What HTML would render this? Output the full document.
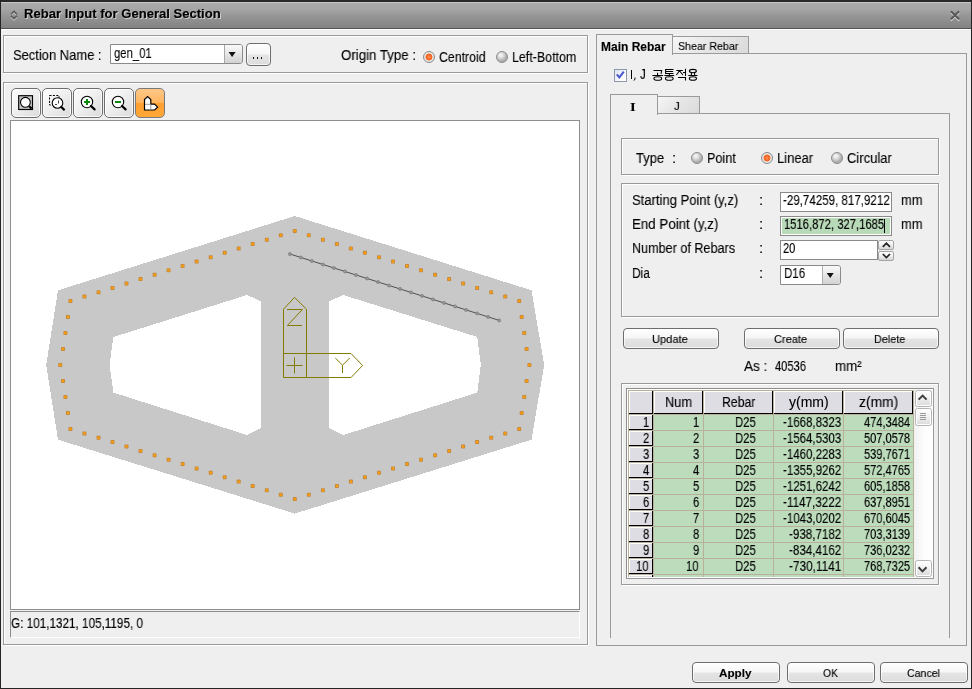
<!DOCTYPE html>
<html><head><meta charset="utf-8"><title>Rebar Input for General Section</title>
<style>
html,body{margin:0;padding:0}
body{width:972px;height:689px;background:#efefef;position:relative;overflow:hidden;font-family:"Liberation Sans",sans-serif;}
.ab{position:absolute;box-sizing:content-box}
.t{position:absolute;white-space:pre;transform-origin:0 0;font-family:"Liberation Sans",sans-serif;will-change:transform;-webkit-text-stroke:0.12px currentColor;}
svg{position:absolute;left:0;top:0;overflow:visible}
</style></head>
<body>
<div class="ab" style="left:0px;top:0px;width:972px;height:2px;background:#282828"></div>
<div class="ab" style="left:0px;top:0px;width:1px;height:689px;background:#242424"></div>
<div class="ab" style="left:971px;top:0px;width:1px;height:689px;background:#242424"></div>
<div class="ab" style="left:0px;top:688px;width:972px;height:1px;background:#242424"></div>
<div class="ab" style="left:1px;top:2px;width:970px;height:27px;background:linear-gradient(#c8c8c8 0,#c4c4c4 1px,#aaaaaa 1.2px,#a6a6a6 25%,#949494 55%,#828282 96%,#808080 26px,#555 26px);"></div>
<div class="ab" style="left:1px;top:29px;width:970px;height:1px;background:#fff"></div>
<svg width="972" height="30"><g fill="none" stroke-width="1.6"><path d="M11 14.4 L14 11.4 L17 14.4" stroke="#c4c4c4" stroke-width="1.3" transform="translate(0,1.2)"/><path d="M11 15.8 L14 18.8 L17 15.8" stroke="#c4c4c4" stroke-width="1.3" transform="translate(0,1.2)"/><path d="M11 14.2 L14 11.2 L17 14.2" stroke="#5a5a5a" stroke-width="1.5"/><path d="M11 15.6 L14 18.6 L17 15.6" stroke="#5a5a5a" stroke-width="1.5"/><path d="M951 12.7 L959 20.7 M959 12.7 L951 20.7" stroke="#dcdcdc" stroke-width="1.6"/><path d="M951 11.3 L959 19.3 M959 11.3 L951 19.3" stroke="#585858" stroke-width="2"/></g></svg>
<span class="t" style="left:24.90px;top:7.64px;font-size:12.3px;line-height:15px;font-weight:700;color:#d0d0d0;transform:scaleX(1.0623);">Rebar Input for General Section</span>
<span class="t" style="left:24.10px;top:6.64px;font-size:12.3px;line-height:15px;font-weight:700;color:#000;transform:scaleX(1.0623);">Rebar Input for General Section</span>
<div class="ab" style="left:4px;top:36px;width:583px;height:36px;border:1px solid #fff;"></div>
<div class="ab" style="left:3px;top:35px;width:583px;height:36px;border:1px solid #9a9a9a;"></div>
<span class="t" style="left:12.70px;top:46.85px;font-size:14px;line-height:17px;font-weight:400;color:#000;transform:scaleX(0.9246);">Section Name :</span>
<div class="ab" style="left:110px;top:44px;width:131px;height:18px;border:1px solid #8a8a8a;background:#fff;border-radius:0 3px 3px 0"></div>
<div class="ab" style="left:224px;top:45px;width:17px;height:18px;border-left:1px solid #a8a8a8;background:linear-gradient(#fafafa,#e6e6e6 50%,#d2d2d2);border-radius:0 2px 2px 0"></div>
<svg width="972" height="100"><path d="M228.6 52 L235.6 52 L232.1 57 Z" fill="#111"/></svg>
<span class="t" style="left:114.30px;top:45.25px;font-size:14px;line-height:17px;font-weight:400;color:#000;transform:scaleX(0.8048);">gen_01</span>
<div class="ab" style="left:246px;top:43px;width:23px;height:21px;border:1px solid #6e6e6e;border-radius:4px;background:linear-gradient(#ffffff 0%,#f6f6f6 45%,#e4e4e4 55%,#dcdcdc 100%);box-shadow:inset 0 0 0 1px rgba(255,255,255,.7);border-radius:4px;"></div>
<div class="ab" style="left:253px;top:57.2px;width:1.3px;height:1.7px;background:#111"></div>
<div class="ab" style="left:257px;top:57.2px;width:1.3px;height:1.7px;background:#111"></div>
<div class="ab" style="left:261px;top:57.2px;width:1.3px;height:1.7px;background:#111"></div>
<span class="t" style="left:340.60px;top:47.15px;font-size:14px;line-height:17px;font-weight:400;color:#000;transform:scaleX(0.9479);">Origin Type :</span>
<div class="ab" style="left:423.3px;top:51.3px;width:10px;height:10px;border:1px solid #8a8a8a;border-radius:50%;background:radial-gradient(circle at 50% 50%, #ff8e58 0,#f2601c 3px,#eef2ee 3.9px,#dcdcdc 5px);"></div>
<span class="t" style="left:439.40px;top:49.25px;font-size:14px;line-height:17px;font-weight:400;color:#000;transform:scaleX(0.8787);">Centroid</span>
<div class="ab" style="left:496.3px;top:51.3px;width:10px;height:10px;border:1px solid #8a8a8a;border-radius:50%;background:radial-gradient(circle at 38% 32%, #fbfbfb 0,#dedede 2.6px,#c2c2c2 4.4px,#acacac 6px);"></div>
<span class="t" style="left:512.40px;top:49.25px;font-size:14px;line-height:17px;font-weight:400;color:#000;transform:scaleX(0.8884);">Left-Bottom</span>
<div class="ab" style="left:4px;top:83px;width:583px;height:561px;border:1px solid #fff;"></div>
<div class="ab" style="left:3px;top:82px;width:583px;height:561px;border:1px solid #9a9a9a;"></div>
<div class="ab" style="left:11px;top:88px;width:28px;height:28px;border:1px solid #6e6e6e;border-radius:5px;background:linear-gradient(135deg,#fdfdfd 0%,#f0f0f0 45%,#dadada 100%);box-shadow:inset 0 0 0 1px rgba(255,255,255,.8)"></div>
<div class="ab" style="left:42px;top:88px;width:28px;height:28px;border:1px solid #6e6e6e;border-radius:5px;background:linear-gradient(135deg,#fdfdfd 0%,#f0f0f0 45%,#dadada 100%);box-shadow:inset 0 0 0 1px rgba(255,255,255,.8)"></div>
<div class="ab" style="left:73px;top:88px;width:28px;height:28px;border:1px solid #6e6e6e;border-radius:5px;background:linear-gradient(135deg,#fdfdfd 0%,#f0f0f0 45%,#dadada 100%);box-shadow:inset 0 0 0 1px rgba(255,255,255,.8)"></div>
<div class="ab" style="left:104px;top:88px;width:28px;height:28px;border:1px solid #6e6e6e;border-radius:5px;background:linear-gradient(135deg,#fdfdfd 0%,#f0f0f0 45%,#dadada 100%);box-shadow:inset 0 0 0 1px rgba(255,255,255,.8)"></div>
<div class="ab" style="left:135px;top:88px;width:28px;height:28px;border:1px solid #7a7a7a;border-radius:5px;background:linear-gradient(#ffc888 0%,#ffb660 48%,#ffa030 52%,#ffa838 100%);"></div>
<svg width="200" height="130"><rect x="18.7" y="95.7" width="13.8" height="13.8" fill="#c6c6c6" stroke="#000" stroke-width="1.15"/><circle cx="25.4" cy="102.3" r="4.9" fill="#fff" stroke="#000" stroke-width="1.1"/><path d="M29.2 106.2 L31.6 108.6" stroke="#000" stroke-width="2.2"/><rect x="49.5" y="95.5" width="9.5" height="9.5" fill="none" stroke="#000" stroke-width="1" stroke-dasharray="2 1.4"/><circle cx="57.5" cy="103" r="5.3" fill="#fff" stroke="#000" stroke-width="1.1"/><path d="M55 104.5 h2 M58.5 100.5 v3" stroke="#444" stroke-width="1"/><path d="M61.3 107 L64 109.6" stroke="#000" stroke-width="2.2" stroke-linecap="round"/><circle cx="87" cy="102" r="5.7" fill="#fff" stroke="#000" stroke-width="1.1"/><path d="M84 102 h6 M87 99 v6" stroke="#0a8a0a" stroke-width="2"/><path d="M91 106 L94.6 109.4" stroke="#000" stroke-width="2.2" stroke-linecap="round"/><circle cx="118" cy="102" r="5.7" fill="#fff" stroke="#000" stroke-width="1.1"/><path d="M115 102 h6" stroke="#0a8a0a" stroke-width="2"/><path d="M122 106 L125.6 109.4" stroke="#000" stroke-width="2.2" stroke-linecap="round"/><path d="M144.5 110 L144.5 99.5 L147.6 96.5 L150.8 99.5 L150.8 104.2 L154.6 104.2 L157.6 107.2 L154.6 110 Z" fill="#fff" stroke="#000" stroke-width="1.2"/><path d="M145 104.3 H150.5 M150.8 104.5 V109.5" stroke="#999" stroke-width="1"/></svg>
<div class="ab" style="left:10px;top:120px;width:568px;height:488px;border:1px solid #8e8e8e;background:#fff;"></div>
<div class="ab" style="left:10px;top:611px;width:569px;height:26px;border-left:1px solid #8e8e8e;border-top:1px solid #8e8e8e;border-right:1px solid #fff;border-bottom:1px solid #fff;width:568px;height:25px"></div>
<span class="t" style="left:11.40px;top:614.95px;font-size:14px;line-height:17px;font-weight:400;color:#000;transform:scaleX(0.8367);">G: 101,1321, 105,1195, 0</span>
<svg width="590" height="620" shape-rendering="crispEdges"><path d="M294.8 216.0 L531.5 290.3 L544.2 365.0 L531.5 439.7 L294.8 513.6 L58.0 439.7 L46.2 365.0 L58.0 290.3 Z M113.4 337.0 L247.0 295.0 L261.0 301.3 L261.0 428.0 L247.0 435.0 L113.4 392.6 L109.5 364.8 Z M477.3 337.0 L343.3 295.0 L329.0 301.3 L329.0 428.0 L343.3 435.0 L477.3 392.6 L480.8 364.8 Z" fill="#c8c8c8" fill-rule="evenodd"/></svg>
<svg width="590" height="620"><rect x="68.4" y="299.0" width="4" height="4" rx="0.7" fill="#c48a3c"/><rect x="69.3" y="299.9" width="2.2" height="2.2" fill="#ff9d0e"/><rect x="517.2" y="299.0" width="4" height="4" rx="0.7" fill="#c48a3c"/><rect x="518.1" y="299.9" width="2.2" height="2.2" fill="#ff9d0e"/><rect x="68.4" y="427.0" width="4" height="4" rx="0.7" fill="#c48a3c"/><rect x="69.3" y="427.9" width="2.2" height="2.2" fill="#ff9d0e"/><rect x="517.2" y="427.0" width="4" height="4" rx="0.7" fill="#c48a3c"/><rect x="518.1" y="427.9" width="2.2" height="2.2" fill="#ff9d0e"/><rect x="82.4" y="294.6" width="4" height="4" rx="0.7" fill="#c48a3c"/><rect x="83.3" y="295.5" width="2.2" height="2.2" fill="#ff9d0e"/><rect x="503.2" y="294.6" width="4" height="4" rx="0.7" fill="#c48a3c"/><rect x="504.1" y="295.5" width="2.2" height="2.2" fill="#ff9d0e"/><rect x="82.4" y="431.4" width="4" height="4" rx="0.7" fill="#c48a3c"/><rect x="83.3" y="432.3" width="2.2" height="2.2" fill="#ff9d0e"/><rect x="503.2" y="431.4" width="4" height="4" rx="0.7" fill="#c48a3c"/><rect x="504.1" y="432.3" width="2.2" height="2.2" fill="#ff9d0e"/><rect x="96.5" y="290.2" width="4" height="4" rx="0.7" fill="#c48a3c"/><rect x="97.4" y="291.1" width="2.2" height="2.2" fill="#ff9d0e"/><rect x="489.2" y="290.2" width="4" height="4" rx="0.7" fill="#c48a3c"/><rect x="490.1" y="291.1" width="2.2" height="2.2" fill="#ff9d0e"/><rect x="96.5" y="435.8" width="4" height="4" rx="0.7" fill="#c48a3c"/><rect x="97.4" y="436.7" width="2.2" height="2.2" fill="#ff9d0e"/><rect x="489.2" y="435.8" width="4" height="4" rx="0.7" fill="#c48a3c"/><rect x="490.1" y="436.7" width="2.2" height="2.2" fill="#ff9d0e"/><rect x="110.5" y="285.9" width="4" height="4" rx="0.7" fill="#c48a3c"/><rect x="111.4" y="286.8" width="2.2" height="2.2" fill="#ff9d0e"/><rect x="475.1" y="285.9" width="4" height="4" rx="0.7" fill="#c48a3c"/><rect x="476.0" y="286.8" width="2.2" height="2.2" fill="#ff9d0e"/><rect x="110.5" y="440.1" width="4" height="4" rx="0.7" fill="#c48a3c"/><rect x="111.4" y="441.0" width="2.2" height="2.2" fill="#ff9d0e"/><rect x="475.1" y="440.1" width="4" height="4" rx="0.7" fill="#c48a3c"/><rect x="476.0" y="441.0" width="2.2" height="2.2" fill="#ff9d0e"/><rect x="124.5" y="281.5" width="4" height="4" rx="0.7" fill="#c48a3c"/><rect x="125.4" y="282.4" width="2.2" height="2.2" fill="#ff9d0e"/><rect x="461.1" y="281.5" width="4" height="4" rx="0.7" fill="#c48a3c"/><rect x="462.0" y="282.4" width="2.2" height="2.2" fill="#ff9d0e"/><rect x="124.5" y="444.5" width="4" height="4" rx="0.7" fill="#c48a3c"/><rect x="125.4" y="445.4" width="2.2" height="2.2" fill="#ff9d0e"/><rect x="461.1" y="444.5" width="4" height="4" rx="0.7" fill="#c48a3c"/><rect x="462.0" y="445.4" width="2.2" height="2.2" fill="#ff9d0e"/><rect x="138.5" y="277.1" width="4" height="4" rx="0.7" fill="#c48a3c"/><rect x="139.4" y="278.0" width="2.2" height="2.2" fill="#ff9d0e"/><rect x="447.1" y="277.1" width="4" height="4" rx="0.7" fill="#c48a3c"/><rect x="448.0" y="278.0" width="2.2" height="2.2" fill="#ff9d0e"/><rect x="138.5" y="448.9" width="4" height="4" rx="0.7" fill="#c48a3c"/><rect x="139.4" y="449.8" width="2.2" height="2.2" fill="#ff9d0e"/><rect x="447.1" y="448.9" width="4" height="4" rx="0.7" fill="#c48a3c"/><rect x="448.0" y="449.8" width="2.2" height="2.2" fill="#ff9d0e"/><rect x="152.6" y="272.7" width="4" height="4" rx="0.7" fill="#c48a3c"/><rect x="153.5" y="273.6" width="2.2" height="2.2" fill="#ff9d0e"/><rect x="433.1" y="272.7" width="4" height="4" rx="0.7" fill="#c48a3c"/><rect x="433.9" y="273.6" width="2.2" height="2.2" fill="#ff9d0e"/><rect x="152.6" y="453.3" width="4" height="4" rx="0.7" fill="#c48a3c"/><rect x="153.5" y="454.2" width="2.2" height="2.2" fill="#ff9d0e"/><rect x="433.1" y="453.3" width="4" height="4" rx="0.7" fill="#c48a3c"/><rect x="433.9" y="454.2" width="2.2" height="2.2" fill="#ff9d0e"/><rect x="166.6" y="268.3" width="4" height="4" rx="0.7" fill="#c48a3c"/><rect x="167.5" y="269.2" width="2.2" height="2.2" fill="#ff9d0e"/><rect x="419.0" y="268.3" width="4" height="4" rx="0.7" fill="#c48a3c"/><rect x="419.9" y="269.2" width="2.2" height="2.2" fill="#ff9d0e"/><rect x="166.6" y="457.7" width="4" height="4" rx="0.7" fill="#c48a3c"/><rect x="167.5" y="458.6" width="2.2" height="2.2" fill="#ff9d0e"/><rect x="419.0" y="457.7" width="4" height="4" rx="0.7" fill="#c48a3c"/><rect x="419.9" y="458.6" width="2.2" height="2.2" fill="#ff9d0e"/><rect x="180.6" y="264.0" width="4" height="4" rx="0.7" fill="#c48a3c"/><rect x="181.5" y="264.9" width="2.2" height="2.2" fill="#ff9d0e"/><rect x="405.0" y="264.0" width="4" height="4" rx="0.7" fill="#c48a3c"/><rect x="405.9" y="264.9" width="2.2" height="2.2" fill="#ff9d0e"/><rect x="180.6" y="462.0" width="4" height="4" rx="0.7" fill="#c48a3c"/><rect x="181.5" y="462.9" width="2.2" height="2.2" fill="#ff9d0e"/><rect x="405.0" y="462.0" width="4" height="4" rx="0.7" fill="#c48a3c"/><rect x="405.9" y="462.9" width="2.2" height="2.2" fill="#ff9d0e"/><rect x="194.6" y="259.6" width="4" height="4" rx="0.7" fill="#c48a3c"/><rect x="195.5" y="260.5" width="2.2" height="2.2" fill="#ff9d0e"/><rect x="391.0" y="259.6" width="4" height="4" rx="0.7" fill="#c48a3c"/><rect x="391.9" y="260.5" width="2.2" height="2.2" fill="#ff9d0e"/><rect x="194.6" y="466.4" width="4" height="4" rx="0.7" fill="#c48a3c"/><rect x="195.5" y="467.3" width="2.2" height="2.2" fill="#ff9d0e"/><rect x="391.0" y="466.4" width="4" height="4" rx="0.7" fill="#c48a3c"/><rect x="391.9" y="467.3" width="2.2" height="2.2" fill="#ff9d0e"/><rect x="208.7" y="255.2" width="4" height="4" rx="0.7" fill="#c48a3c"/><rect x="209.6" y="256.1" width="2.2" height="2.2" fill="#ff9d0e"/><rect x="377.0" y="255.2" width="4" height="4" rx="0.7" fill="#c48a3c"/><rect x="377.9" y="256.1" width="2.2" height="2.2" fill="#ff9d0e"/><rect x="208.7" y="470.8" width="4" height="4" rx="0.7" fill="#c48a3c"/><rect x="209.6" y="471.7" width="2.2" height="2.2" fill="#ff9d0e"/><rect x="377.0" y="470.8" width="4" height="4" rx="0.7" fill="#c48a3c"/><rect x="377.9" y="471.7" width="2.2" height="2.2" fill="#ff9d0e"/><rect x="222.7" y="250.8" width="4" height="4" rx="0.7" fill="#c48a3c"/><rect x="223.6" y="251.7" width="2.2" height="2.2" fill="#ff9d0e"/><rect x="362.9" y="250.8" width="4" height="4" rx="0.7" fill="#c48a3c"/><rect x="363.8" y="251.7" width="2.2" height="2.2" fill="#ff9d0e"/><rect x="222.7" y="475.2" width="4" height="4" rx="0.7" fill="#c48a3c"/><rect x="223.6" y="476.1" width="2.2" height="2.2" fill="#ff9d0e"/><rect x="362.9" y="475.2" width="4" height="4" rx="0.7" fill="#c48a3c"/><rect x="363.8" y="476.1" width="2.2" height="2.2" fill="#ff9d0e"/><rect x="236.7" y="246.4" width="4" height="4" rx="0.7" fill="#c48a3c"/><rect x="237.6" y="247.3" width="2.2" height="2.2" fill="#ff9d0e"/><rect x="348.9" y="246.4" width="4" height="4" rx="0.7" fill="#c48a3c"/><rect x="349.8" y="247.3" width="2.2" height="2.2" fill="#ff9d0e"/><rect x="236.7" y="479.6" width="4" height="4" rx="0.7" fill="#c48a3c"/><rect x="237.6" y="480.5" width="2.2" height="2.2" fill="#ff9d0e"/><rect x="348.9" y="479.6" width="4" height="4" rx="0.7" fill="#c48a3c"/><rect x="349.8" y="480.5" width="2.2" height="2.2" fill="#ff9d0e"/><rect x="250.7" y="242.0" width="4" height="4" rx="0.7" fill="#c48a3c"/><rect x="251.6" y="242.9" width="2.2" height="2.2" fill="#ff9d0e"/><rect x="334.9" y="242.0" width="4" height="4" rx="0.7" fill="#c48a3c"/><rect x="335.8" y="242.9" width="2.2" height="2.2" fill="#ff9d0e"/><rect x="250.7" y="484.0" width="4" height="4" rx="0.7" fill="#c48a3c"/><rect x="251.6" y="484.9" width="2.2" height="2.2" fill="#ff9d0e"/><rect x="334.9" y="484.0" width="4" height="4" rx="0.7" fill="#c48a3c"/><rect x="335.8" y="484.9" width="2.2" height="2.2" fill="#ff9d0e"/><rect x="264.8" y="237.7" width="4" height="4" rx="0.7" fill="#c48a3c"/><rect x="265.6" y="238.6" width="2.2" height="2.2" fill="#ff9d0e"/><rect x="320.9" y="237.7" width="4" height="4" rx="0.7" fill="#c48a3c"/><rect x="321.8" y="238.6" width="2.2" height="2.2" fill="#ff9d0e"/><rect x="264.8" y="488.3" width="4" height="4" rx="0.7" fill="#c48a3c"/><rect x="265.6" y="489.2" width="2.2" height="2.2" fill="#ff9d0e"/><rect x="320.9" y="488.3" width="4" height="4" rx="0.7" fill="#c48a3c"/><rect x="321.8" y="489.2" width="2.2" height="2.2" fill="#ff9d0e"/><rect x="278.8" y="233.3" width="4" height="4" rx="0.7" fill="#c48a3c"/><rect x="279.7" y="234.2" width="2.2" height="2.2" fill="#ff9d0e"/><rect x="306.8" y="233.3" width="4" height="4" rx="0.7" fill="#c48a3c"/><rect x="307.7" y="234.2" width="2.2" height="2.2" fill="#ff9d0e"/><rect x="278.8" y="492.7" width="4" height="4" rx="0.7" fill="#c48a3c"/><rect x="279.7" y="493.6" width="2.2" height="2.2" fill="#ff9d0e"/><rect x="306.8" y="492.7" width="4" height="4" rx="0.7" fill="#c48a3c"/><rect x="307.7" y="493.6" width="2.2" height="2.2" fill="#ff9d0e"/><rect x="292.8" y="228.9" width="4" height="4" rx="0.7" fill="#c48a3c"/><rect x="293.7" y="229.8" width="2.2" height="2.2" fill="#ff9d0e"/><rect x="292.8" y="497.1" width="4" height="4" rx="0.7" fill="#c48a3c"/><rect x="293.7" y="498.0" width="2.2" height="2.2" fill="#ff9d0e"/><rect x="65.9" y="315.0" width="4" height="4" rx="0.7" fill="#c48a3c"/><rect x="66.8" y="315.9" width="2.2" height="2.2" fill="#ff9d0e"/><rect x="519.7" y="315.0" width="4" height="4" rx="0.7" fill="#c48a3c"/><rect x="520.6" y="315.9" width="2.2" height="2.2" fill="#ff9d0e"/><rect x="63.4" y="331.0" width="4" height="4" rx="0.7" fill="#c48a3c"/><rect x="64.3" y="331.9" width="2.2" height="2.2" fill="#ff9d0e"/><rect x="522.2" y="331.0" width="4" height="4" rx="0.7" fill="#c48a3c"/><rect x="523.1" y="331.9" width="2.2" height="2.2" fill="#ff9d0e"/><rect x="61.0" y="347.0" width="4" height="4" rx="0.7" fill="#c48a3c"/><rect x="61.9" y="347.9" width="2.2" height="2.2" fill="#ff9d0e"/><rect x="524.6" y="347.0" width="4" height="4" rx="0.7" fill="#c48a3c"/><rect x="525.5" y="347.9" width="2.2" height="2.2" fill="#ff9d0e"/><rect x="58.2" y="363.0" width="4" height="4" rx="0.7" fill="#c48a3c"/><rect x="59.1" y="363.9" width="2.2" height="2.2" fill="#ff9d0e"/><rect x="527.4" y="363.0" width="4" height="4" rx="0.7" fill="#c48a3c"/><rect x="528.3" y="363.9" width="2.2" height="2.2" fill="#ff9d0e"/><rect x="61.0" y="379.0" width="4" height="4" rx="0.7" fill="#c48a3c"/><rect x="61.9" y="379.9" width="2.2" height="2.2" fill="#ff9d0e"/><rect x="524.6" y="379.0" width="4" height="4" rx="0.7" fill="#c48a3c"/><rect x="525.5" y="379.9" width="2.2" height="2.2" fill="#ff9d0e"/><rect x="63.4" y="395.0" width="4" height="4" rx="0.7" fill="#c48a3c"/><rect x="64.3" y="395.9" width="2.2" height="2.2" fill="#ff9d0e"/><rect x="522.2" y="395.0" width="4" height="4" rx="0.7" fill="#c48a3c"/><rect x="523.1" y="395.9" width="2.2" height="2.2" fill="#ff9d0e"/><rect x="65.9" y="411.0" width="4" height="4" rx="0.7" fill="#c48a3c"/><rect x="66.8" y="411.9" width="2.2" height="2.2" fill="#ff9d0e"/><rect x="519.7" y="411.0" width="4" height="4" rx="0.7" fill="#c48a3c"/><rect x="520.6" y="411.9" width="2.2" height="2.2" fill="#ff9d0e"/><path d="M289.9 254 L499.1 320.4" stroke="#505050" stroke-width="1"/><circle cx="289.9" cy="254.0" r="1.5" fill="#9c9c9c" stroke="#747474" stroke-width="0.7"/><circle cx="300.9" cy="257.5" r="1.5" fill="#9c9c9c" stroke="#747474" stroke-width="0.7"/><circle cx="311.9" cy="261.0" r="1.5" fill="#9c9c9c" stroke="#747474" stroke-width="0.7"/><circle cx="322.9" cy="264.5" r="1.5" fill="#9c9c9c" stroke="#747474" stroke-width="0.7"/><circle cx="333.9" cy="268.0" r="1.5" fill="#9c9c9c" stroke="#747474" stroke-width="0.7"/><circle cx="345.0" cy="271.5" r="1.5" fill="#9c9c9c" stroke="#747474" stroke-width="0.7"/><circle cx="356.0" cy="275.0" r="1.5" fill="#9c9c9c" stroke="#747474" stroke-width="0.7"/><circle cx="367.0" cy="278.5" r="1.5" fill="#9c9c9c" stroke="#747474" stroke-width="0.7"/><circle cx="378.0" cy="282.0" r="1.5" fill="#9c9c9c" stroke="#747474" stroke-width="0.7"/><circle cx="389.0" cy="285.5" r="1.5" fill="#9c9c9c" stroke="#747474" stroke-width="0.7"/><circle cx="400.0" cy="288.9" r="1.5" fill="#9c9c9c" stroke="#747474" stroke-width="0.7"/><circle cx="411.0" cy="292.4" r="1.5" fill="#9c9c9c" stroke="#747474" stroke-width="0.7"/><circle cx="422.0" cy="295.9" r="1.5" fill="#9c9c9c" stroke="#747474" stroke-width="0.7"/><circle cx="433.0" cy="299.4" r="1.5" fill="#9c9c9c" stroke="#747474" stroke-width="0.7"/><circle cx="444.0" cy="302.9" r="1.5" fill="#9c9c9c" stroke="#747474" stroke-width="0.7"/><circle cx="455.1" cy="306.4" r="1.5" fill="#9c9c9c" stroke="#747474" stroke-width="0.7"/><circle cx="466.1" cy="309.9" r="1.5" fill="#9c9c9c" stroke="#747474" stroke-width="0.7"/><circle cx="477.1" cy="313.4" r="1.5" fill="#9c9c9c" stroke="#747474" stroke-width="0.7"/><circle cx="488.1" cy="316.9" r="1.5" fill="#9c9c9c" stroke="#747474" stroke-width="0.7"/><circle cx="499.1" cy="320.4" r="1.5" fill="#9c9c9c" stroke="#747474" stroke-width="0.7"/><g fill="none" stroke="#837a00" stroke-width="1"><path d="M283.5 377.5 V309.2 L294.5 297.4 L306.5 309.2 V377.5 M283.5 353.5 H351 L362.6 365.5 L351 377.5 H283.5"/><path d="M287 309.5 H302.4 L287.4 325.5 H302"/><path d="M286.5 365.5 H302.5 M294.5 357.5 V373.5"/><path d="M335.3 358 L342.5 365.2 L349.7 358 M342.5 365.2 V373"/></g></svg>
<div class="ab" style="left:596px;top:53px;width:369px;height:591px;border:1px solid #9a9a9a;"></div>
<div class="ab" style="left:672px;top:36px;width:75px;height:16px;border:1px solid #9a9a9a;border-bottom:none;background:linear-gradient(135deg,#f6f6f6 0%,#e6e6e6 50%,#dadada 100%);"></div>
<div class="ab" style="left:596px;top:34px;width:75px;height:20px;border:1px solid #9a9a9a;border-bottom:none;background:#efefef;"></div>
<span class="t" style="left:601.00px;top:40.04px;font-size:12px;line-height:14px;font-weight:700;color:#000;transform:scaleX(1.0002);">Main Rebar</span>
<span class="t" style="left:677.90px;top:39.11px;font-size:11.8px;line-height:14px;font-weight:400;color:#000;transform:scaleX(0.9015);">Shear Rebar</span>
<div class="ab" style="left:614px;top:69px;width:11px;height:11px;border:1px solid #8c98a8;background:linear-gradient(135deg,#dfe2f2,#fff 80%);"></div>
<svg width="972" height="100"><path d="M616.8 74.4 L619.4 77.4 L623.8 71.6" fill="none" stroke="#4858c8" stroke-width="2"/></svg>
<div class="ab" style="left:631px;top:70px;width:1px;height:9px;background:#000"></div>
<svg width="972" height="100"><path d="M635 77.6 V79 L634 80.6" fill="none" stroke="#000" stroke-width="1"/></svg>
<span class="t" style="left:640.40px;top:65.85px;font-size:14px;line-height:17px;font-weight:400;color:#000;transform:scaleX(0.8286);">J</span>
<svg width="972" height="100"><g fill="none" stroke="#000" stroke-width="1.05"><path d="M653.5 70.5 H661.7 L661 73.8 M657.6 72.8 V75.5 M652.4 75.5 H663.1"/><ellipse cx="657.8" cy="78.4" rx="3.9" ry="1.75"/><path d="M673.5 69.5 H665.6 V73.5 H673.5 M665.6 71.5 H673.2 M669.4 73.5 V75.5 M664.4 75.5 H674.2"/><ellipse cx="669.3" cy="78.5" rx="3.9" ry="1.75"/><path d="M676.4 70.5 H682.8 M679.7 70.5 L676.4 75 M679.7 71 L683 75 M683 72.5 H685.5 M685.5 68.8 V76 M678 77.5 H685.5 V80.4"/><ellipse cx="692.9" cy="71" rx="3.5" ry="1.65"/><path d="M691.4 73 V75.5 M694.6 73 V75.5 M688.3 75.5 H697.5"/><ellipse cx="692.9" cy="78.5" rx="3.6" ry="1.75"/></g></svg>
<div class="ab" style="left:610px;top:113px;width:338px;height:530px;border:1px solid #9a9a9a;border-bottom:none;height:524px"></div>
<div class="ab" style="left:657px;top:96px;width:41px;height:16px;border:1px solid #9a9a9a;border-bottom:none;background:linear-gradient(135deg,#f6f6f6 0%,#e6e6e6 50%,#dadada 100%);"></div>
<div class="ab" style="left:610px;top:94px;width:46px;height:20px;border:1px solid #9a9a9a;border-bottom:none;background:#efefef;"></div>
<span class="t" style="left:630.30px;top:100.08px;font-size:12.5px;line-height:15px;font-weight:700;color:#000;transform:scaleX(1.1692);font-family:'Liberation Serif',serif;">I</span>
<span class="t" style="left:673.90px;top:99.41px;font-size:11.8px;line-height:14px;font-weight:400;color:#000;transform:scaleX(0.9651);">J</span>
<div class="ab" style="left:622px;top:139px;width:316px;height:35px;border:1px solid #fff;"></div>
<div class="ab" style="left:621px;top:138px;width:316px;height:35px;border:1px solid #9a9a9a;"></div>
<span class="t" style="left:636.20px;top:149.95px;font-size:14px;line-height:17px;font-weight:400;color:#000;transform:scaleX(0.9289);">Type</span>
<span class="t" style="left:672.40px;top:149.95px;font-size:14px;line-height:17px;font-weight:400;color:#000;transform:scaleX(1.0795);">:</span>
<div class="ab" style="left:691.3px;top:152.3px;width:10px;height:10px;border:1px solid #8a8a8a;border-radius:50%;background:radial-gradient(circle at 38% 32%, #fbfbfb 0,#dedede 2.6px,#c2c2c2 4.4px,#acacac 6px);"></div>
<span class="t" style="left:706.90px;top:149.95px;font-size:14px;line-height:17px;font-weight:400;color:#000;transform:scaleX(0.9053);">Point</span>
<div class="ab" style="left:761.3px;top:152.3px;width:10px;height:10px;border:1px solid #8a8a8a;border-radius:50%;background:radial-gradient(circle at 50% 50%, #ff8e58 0,#f2601c 3px,#eef2ee 3.9px,#dcdcdc 5px);"></div>
<span class="t" style="left:776.70px;top:149.95px;font-size:14px;line-height:17px;font-weight:400;color:#000;transform:scaleX(0.9275);">Linear</span>
<div class="ab" style="left:831.3px;top:152.3px;width:10px;height:10px;border:1px solid #8a8a8a;border-radius:50%;background:radial-gradient(circle at 38% 32%, #fbfbfb 0,#dedede 2.6px,#c2c2c2 4.4px,#acacac 6px);"></div>
<span class="t" style="left:847.00px;top:149.95px;font-size:14px;line-height:17px;font-weight:400;color:#000;transform:scaleX(0.9288);">Circular</span>
<div class="ab" style="left:622px;top:184px;width:316px;height:132px;border:1px solid #fff;"></div>
<div class="ab" style="left:621px;top:183px;width:316px;height:132px;border:1px solid #9a9a9a;"></div>
<span class="t" style="left:632.00px;top:192.25px;font-size:14px;line-height:17px;font-weight:400;color:#000;transform:scaleX(0.9306);">Starting Point (y,z)</span>
<span class="t" style="left:632.00px;top:215.95px;font-size:14px;line-height:17px;font-weight:400;color:#000;transform:scaleX(0.9517);">End Point (y,z)</span>
<span class="t" style="left:632.00px;top:240.05px;font-size:14px;line-height:17px;font-weight:400;color:#000;transform:scaleX(0.9004);">Number of Rebars</span>
<span class="t" style="left:632.00px;top:265.05px;font-size:14px;line-height:17px;font-weight:400;color:#000;transform:scaleX(0.8517);">Dia</span>
<span class="t" style="left:759.40px;top:192.25px;font-size:14px;line-height:17px;font-weight:400;color:#000;transform:scaleX(1.0795);">:</span>
<span class="t" style="left:759.40px;top:215.95px;font-size:14px;line-height:17px;font-weight:400;color:#000;transform:scaleX(1.0795);">:</span>
<span class="t" style="left:759.40px;top:240.05px;font-size:14px;line-height:17px;font-weight:400;color:#000;transform:scaleX(1.0795);">:</span>
<span class="t" style="left:759.40px;top:265.05px;font-size:14px;line-height:17px;font-weight:400;color:#000;transform:scaleX(1.0795);">:</span>
<div class="ab" style="left:780px;top:192px;width:110px;height:18px;border:1px solid #8a8a8a;background:#fff"></div>
<span class="t" style="left:783.30px;top:192.25px;font-size:14px;line-height:17px;font-weight:400;color:#000;transform:scaleX(0.8256);">-29,74259, 817,9212</span>
<div class="ab" style="left:780px;top:216px;width:110px;height:18px;border:1px solid #8a8a8a;background:#fff"></div>
<div class="ab" style="left:782px;top:218px;width:108px;height:16px;background:#b9dab9"></div>
<span class="t" style="left:783.80px;top:215.95px;font-size:14px;line-height:17px;font-weight:400;color:#000;transform:scaleX(0.8035);">1516,872, 327,1685</span>
<div class="ab" style="left:884px;top:219px;width:1px;height:14px;background:#000"></div>
<span class="t" style="left:901.30px;top:191.85px;font-size:14px;line-height:17px;font-weight:400;color:#000;transform:scaleX(0.9216);">mm</span>
<span class="t" style="left:901.30px;top:215.75px;font-size:14px;line-height:17px;font-weight:400;color:#000;transform:scaleX(0.9216);">mm</span>
<div class="ab" style="left:780px;top:240px;width:96px;height:18px;border:1px solid #8a8a8a;background:#fff"></div>
<span class="t" style="left:783.30px;top:240.05px;font-size:14px;line-height:17px;font-weight:400;color:#000;transform:scaleX(0.7896);">20</span>
<div class="ab" style="left:878px;top:240px;width:14px;height:8px;border:1px solid #a4a4a4;border-radius:2px;background:linear-gradient(#fdfdfd,#f0f0f0 50%,#d4d4d4);"></div>
<div class="ab" style="left:878px;top:251px;width:14px;height:8px;border:1px solid #a4a4a4;border-radius:2px;background:linear-gradient(#fdfdfd,#f0f0f0 50%,#d4d4d4);"></div>
<svg width="972" height="300"><g fill="none" stroke="#222" stroke-width="1.7"><path d="M882.8 246.8 L886.4 243.3 L890 246.8"/><path d="M882.8 254 L886.4 257.5 L890 254"/></g></svg>
<div class="ab" style="left:780px;top:265px;width:59px;height:18px;border:1px solid #8a8a8a;background:#fff;border-radius:0 3px 3px 0"></div>
<div class="ab" style="left:822px;top:266px;width:17px;height:18px;border-left:1px solid #b0b0b0;background:linear-gradient(#fafafa,#e6e6e6 50%,#d2d2d2);border-radius:0 3px 3px 0"></div>
<svg width="972" height="300"><path d="M826.7 273 L833.7 273 L830.2 278 Z" fill="#111"/></svg>
<span class="t" style="left:783.80px;top:265.05px;font-size:14px;line-height:17px;font-weight:400;color:#000;transform:scaleX(0.8214);">D16</span>
<div class="ab" style="left:623px;top:328px;width:94px;height:19px;border:1px solid #6e6e6e;border-radius:4px;background:linear-gradient(#ffffff 0%,#f6f6f6 45%,#e4e4e4 55%,#dcdcdc 100%);box-shadow:inset 0 0 0 1px rgba(255,255,255,.7);"></div>
<span class="t" style="left:652.00px;top:332.21px;font-size:11.8px;line-height:14px;font-weight:400;color:#000;transform:scaleX(0.9409);">Update</span>
<div class="ab" style="left:744px;top:328px;width:94px;height:19px;border:1px solid #6e6e6e;border-radius:4px;background:linear-gradient(#ffffff 0%,#f6f6f6 45%,#e4e4e4 55%,#dcdcdc 100%);box-shadow:inset 0 0 0 1px rgba(255,255,255,.7);"></div>
<span class="t" style="left:774.40px;top:332.21px;font-size:11.8px;line-height:14px;font-weight:400;color:#000;transform:scaleX(0.9373);">Create</span>
<div class="ab" style="left:843px;top:328px;width:94px;height:19px;border:1px solid #6e6e6e;border-radius:4px;background:linear-gradient(#ffffff 0%,#f6f6f6 45%,#e4e4e4 55%,#dcdcdc 100%);box-shadow:inset 0 0 0 1px rgba(255,255,255,.7);"></div>
<span class="t" style="left:874.20px;top:332.21px;font-size:11.8px;line-height:14px;font-weight:400;color:#000;transform:scaleX(0.9176);">Delete</span>
<span class="t" style="left:744.20px;top:358.05px;font-size:14px;line-height:17px;font-weight:400;color:#000;transform:scaleX(0.9699);">As :</span>
<span class="t" style="left:774.80px;top:358.05px;font-size:14px;line-height:17px;font-weight:400;color:#000;transform:scaleX(0.7961);">40536</span>
<span class="t" style="left:835.00px;top:358.05px;font-size:14px;line-height:17px;font-weight:400;color:#000;transform:scaleX(0.9500);">mm²</span>
<div class="ab" style="left:622px;top:384px;width:316px;height:200px;border:1px solid #fff;"></div>
<div class="ab" style="left:621px;top:383px;width:316px;height:200px;border:1px solid #9a9a9a;"></div>
<div class="ab" style="left:626px;top:388px;width:306px;height:189px;border:1px solid #9a9a9a;border-left-color:#8e8e8e;border-top-color:#8e8e8e;background:#fff"></div>
<div class="ab" style="left:628px;top:390px;width:286px;height:187px;background:#b8b09a"></div>
<div class="ab" style="left:629px;top:391px;width:23px;height:22px;background:#dddde3;border-right:1px solid #000;border-bottom:1px solid #000;box-shadow:inset 1px 1px 0 #fff"></div>
<div class="ab" style="left:654px;top:391px;width:48px;height:22px;background:#dddde3;border-right:1px solid #000;border-bottom:1px solid #000;box-shadow:inset 1px 1px 0 #fff"></div>
<div class="ab" style="left:704px;top:391px;width:68px;height:22px;background:#dddde3;border-right:1px solid #000;border-bottom:1px solid #000;box-shadow:inset 1px 1px 0 #fff"></div>
<div class="ab" style="left:774px;top:391px;width:68px;height:22px;background:#dddde3;border-right:1px solid #000;border-bottom:1px solid #000;box-shadow:inset 1px 1px 0 #fff"></div>
<div class="ab" style="left:844px;top:391px;width:68px;height:22px;background:#dddde3;border-right:1px solid #000;border-bottom:1px solid #000;box-shadow:inset 1px 1px 0 #fff"></div>
<div class="ab" style="left:629px;top:415px;width:23px;height:14px;background:#dddde3;border-right:1px solid #000;border-bottom:1px solid #000;box-shadow:inset 1px 1px 0 #fff"></div>
<div class="ab" style="left:654px;top:415px;width:49px;height:15px;background:#bcdcbc"></div>
<div class="ab" style="left:704px;top:415px;width:69px;height:15px;background:#bcdcbc"></div>
<div class="ab" style="left:774px;top:415px;width:69px;height:15px;background:#bcdcbc"></div>
<div class="ab" style="left:844px;top:415px;width:69px;height:15px;background:#bcdcbc"></div>
<div class="ab" style="left:629px;top:431px;width:23px;height:14px;background:#dddde3;border-right:1px solid #000;border-bottom:1px solid #000;box-shadow:inset 1px 1px 0 #fff"></div>
<div class="ab" style="left:654px;top:431px;width:49px;height:15px;background:#bcdcbc"></div>
<div class="ab" style="left:704px;top:431px;width:69px;height:15px;background:#bcdcbc"></div>
<div class="ab" style="left:774px;top:431px;width:69px;height:15px;background:#bcdcbc"></div>
<div class="ab" style="left:844px;top:431px;width:69px;height:15px;background:#bcdcbc"></div>
<div class="ab" style="left:629px;top:447px;width:23px;height:14px;background:#dddde3;border-right:1px solid #000;border-bottom:1px solid #000;box-shadow:inset 1px 1px 0 #fff"></div>
<div class="ab" style="left:654px;top:447px;width:49px;height:15px;background:#bcdcbc"></div>
<div class="ab" style="left:704px;top:447px;width:69px;height:15px;background:#bcdcbc"></div>
<div class="ab" style="left:774px;top:447px;width:69px;height:15px;background:#bcdcbc"></div>
<div class="ab" style="left:844px;top:447px;width:69px;height:15px;background:#bcdcbc"></div>
<div class="ab" style="left:629px;top:463px;width:23px;height:14px;background:#dddde3;border-right:1px solid #000;border-bottom:1px solid #000;box-shadow:inset 1px 1px 0 #fff"></div>
<div class="ab" style="left:654px;top:463px;width:49px;height:15px;background:#bcdcbc"></div>
<div class="ab" style="left:704px;top:463px;width:69px;height:15px;background:#bcdcbc"></div>
<div class="ab" style="left:774px;top:463px;width:69px;height:15px;background:#bcdcbc"></div>
<div class="ab" style="left:844px;top:463px;width:69px;height:15px;background:#bcdcbc"></div>
<div class="ab" style="left:629px;top:479px;width:23px;height:14px;background:#dddde3;border-right:1px solid #000;border-bottom:1px solid #000;box-shadow:inset 1px 1px 0 #fff"></div>
<div class="ab" style="left:654px;top:479px;width:49px;height:15px;background:#bcdcbc"></div>
<div class="ab" style="left:704px;top:479px;width:69px;height:15px;background:#bcdcbc"></div>
<div class="ab" style="left:774px;top:479px;width:69px;height:15px;background:#bcdcbc"></div>
<div class="ab" style="left:844px;top:479px;width:69px;height:15px;background:#bcdcbc"></div>
<div class="ab" style="left:629px;top:495px;width:23px;height:14px;background:#dddde3;border-right:1px solid #000;border-bottom:1px solid #000;box-shadow:inset 1px 1px 0 #fff"></div>
<div class="ab" style="left:654px;top:495px;width:49px;height:15px;background:#bcdcbc"></div>
<div class="ab" style="left:704px;top:495px;width:69px;height:15px;background:#bcdcbc"></div>
<div class="ab" style="left:774px;top:495px;width:69px;height:15px;background:#bcdcbc"></div>
<div class="ab" style="left:844px;top:495px;width:69px;height:15px;background:#bcdcbc"></div>
<div class="ab" style="left:629px;top:511px;width:23px;height:14px;background:#dddde3;border-right:1px solid #000;border-bottom:1px solid #000;box-shadow:inset 1px 1px 0 #fff"></div>
<div class="ab" style="left:654px;top:511px;width:49px;height:15px;background:#bcdcbc"></div>
<div class="ab" style="left:704px;top:511px;width:69px;height:15px;background:#bcdcbc"></div>
<div class="ab" style="left:774px;top:511px;width:69px;height:15px;background:#bcdcbc"></div>
<div class="ab" style="left:844px;top:511px;width:69px;height:15px;background:#bcdcbc"></div>
<div class="ab" style="left:629px;top:527px;width:23px;height:14px;background:#dddde3;border-right:1px solid #000;border-bottom:1px solid #000;box-shadow:inset 1px 1px 0 #fff"></div>
<div class="ab" style="left:654px;top:527px;width:49px;height:15px;background:#bcdcbc"></div>
<div class="ab" style="left:704px;top:527px;width:69px;height:15px;background:#bcdcbc"></div>
<div class="ab" style="left:774px;top:527px;width:69px;height:15px;background:#bcdcbc"></div>
<div class="ab" style="left:844px;top:527px;width:69px;height:15px;background:#bcdcbc"></div>
<div class="ab" style="left:629px;top:543px;width:23px;height:14px;background:#dddde3;border-right:1px solid #000;border-bottom:1px solid #000;box-shadow:inset 1px 1px 0 #fff"></div>
<div class="ab" style="left:654px;top:543px;width:49px;height:15px;background:#bcdcbc"></div>
<div class="ab" style="left:704px;top:543px;width:69px;height:15px;background:#bcdcbc"></div>
<div class="ab" style="left:774px;top:543px;width:69px;height:15px;background:#bcdcbc"></div>
<div class="ab" style="left:844px;top:543px;width:69px;height:15px;background:#bcdcbc"></div>
<div class="ab" style="left:629px;top:559px;width:23px;height:14px;background:#dddde3;border-right:1px solid #000;border-bottom:1px solid #000;box-shadow:inset 1px 1px 0 #fff"></div>
<div class="ab" style="left:654px;top:559px;width:49px;height:15px;background:#bcdcbc"></div>
<div class="ab" style="left:704px;top:559px;width:69px;height:15px;background:#bcdcbc"></div>
<div class="ab" style="left:774px;top:559px;width:69px;height:15px;background:#bcdcbc"></div>
<div class="ab" style="left:844px;top:559px;width:69px;height:15px;background:#bcdcbc"></div>
<div class="ab" style="left:629px;top:575px;width:24px;height:2px;background:#dddde3;border-right:1px solid #000;width:23px;box-shadow:inset 1px 1px 0 #fff"></div>
<div class="ab" style="left:654px;top:575px;width:49px;height:2px;background:#bcdcbc"></div>
<div class="ab" style="left:704px;top:575px;width:69px;height:2px;background:#bcdcbc"></div>
<div class="ab" style="left:774px;top:575px;width:69px;height:2px;background:#bcdcbc"></div>
<div class="ab" style="left:844px;top:575px;width:69px;height:2px;background:#bcdcbc"></div>
<span class="t" style="left:665.20px;top:394.15px;font-size:14px;line-height:17px;font-weight:400;color:#000;transform:scaleX(0.9133);">Num</span>
<span class="t" style="left:722.30px;top:394.15px;font-size:14px;line-height:17px;font-weight:400;color:#000;transform:scaleX(0.8731);">Rebar</span>
<span class="t" style="left:788.80px;top:394.15px;font-size:14px;line-height:17px;font-weight:400;color:#000;transform:scaleX(0.9986);">y(mm)</span>
<span class="t" style="left:859.20px;top:394.15px;font-size:14px;line-height:17px;font-weight:400;color:#000;transform:scaleX(0.9885);">z(mm)</span>
<span class="t" style="left:642.60px;top:414.25px;font-size:14px;line-height:17px;font-weight:400;color:#000;transform:scaleX(0.7952);">1</span>
<span class="t" style="left:692.70px;top:414.25px;font-size:14px;line-height:17px;font-weight:400;color:#000;transform:scaleX(0.7952);">1</span>
<span class="t" style="left:735.00px;top:414.25px;font-size:14px;line-height:17px;font-weight:400;color:#000;transform:scaleX(0.8097);">D25</span>
<span class="t" style="left:782.50px;top:414.25px;font-size:14px;line-height:17px;font-weight:400;color:#000;transform:scaleX(0.8215);">-1668,8323</span>
<span class="t" style="left:864.40px;top:414.25px;font-size:14px;line-height:17px;font-weight:400;color:#000;transform:scaleX(0.7910);">474,3484</span>
<span class="t" style="left:642.60px;top:430.25px;font-size:14px;line-height:17px;font-weight:400;color:#000;transform:scaleX(0.7952);">2</span>
<span class="t" style="left:692.70px;top:430.25px;font-size:14px;line-height:17px;font-weight:400;color:#000;transform:scaleX(0.7952);">2</span>
<span class="t" style="left:735.00px;top:430.25px;font-size:14px;line-height:17px;font-weight:400;color:#000;transform:scaleX(0.8097);">D25</span>
<span class="t" style="left:782.50px;top:430.25px;font-size:14px;line-height:17px;font-weight:400;color:#000;transform:scaleX(0.8215);">-1564,5303</span>
<span class="t" style="left:864.40px;top:430.25px;font-size:14px;line-height:17px;font-weight:400;color:#000;transform:scaleX(0.7910);">507,0578</span>
<span class="t" style="left:642.60px;top:446.25px;font-size:14px;line-height:17px;font-weight:400;color:#000;transform:scaleX(0.7952);">3</span>
<span class="t" style="left:692.70px;top:446.25px;font-size:14px;line-height:17px;font-weight:400;color:#000;transform:scaleX(0.7952);">3</span>
<span class="t" style="left:735.00px;top:446.25px;font-size:14px;line-height:17px;font-weight:400;color:#000;transform:scaleX(0.8097);">D25</span>
<span class="t" style="left:782.50px;top:446.25px;font-size:14px;line-height:17px;font-weight:400;color:#000;transform:scaleX(0.8215);">-1460,2283</span>
<span class="t" style="left:864.40px;top:446.25px;font-size:14px;line-height:17px;font-weight:400;color:#000;transform:scaleX(0.7910);">539,7671</span>
<span class="t" style="left:642.60px;top:462.25px;font-size:14px;line-height:17px;font-weight:400;color:#000;transform:scaleX(0.7952);">4</span>
<span class="t" style="left:692.70px;top:462.25px;font-size:14px;line-height:17px;font-weight:400;color:#000;transform:scaleX(0.7952);">4</span>
<span class="t" style="left:735.00px;top:462.25px;font-size:14px;line-height:17px;font-weight:400;color:#000;transform:scaleX(0.8097);">D25</span>
<span class="t" style="left:782.50px;top:462.25px;font-size:14px;line-height:17px;font-weight:400;color:#000;transform:scaleX(0.8215);">-1355,9262</span>
<span class="t" style="left:864.40px;top:462.25px;font-size:14px;line-height:17px;font-weight:400;color:#000;transform:scaleX(0.7910);">572,4765</span>
<span class="t" style="left:642.60px;top:478.25px;font-size:14px;line-height:17px;font-weight:400;color:#000;transform:scaleX(0.7952);">5</span>
<span class="t" style="left:692.70px;top:478.25px;font-size:14px;line-height:17px;font-weight:400;color:#000;transform:scaleX(0.7952);">5</span>
<span class="t" style="left:735.00px;top:478.25px;font-size:14px;line-height:17px;font-weight:400;color:#000;transform:scaleX(0.8097);">D25</span>
<span class="t" style="left:782.50px;top:478.25px;font-size:14px;line-height:17px;font-weight:400;color:#000;transform:scaleX(0.8215);">-1251,6242</span>
<span class="t" style="left:864.40px;top:478.25px;font-size:14px;line-height:17px;font-weight:400;color:#000;transform:scaleX(0.7910);">605,1858</span>
<span class="t" style="left:642.60px;top:494.25px;font-size:14px;line-height:17px;font-weight:400;color:#000;transform:scaleX(0.7952);">6</span>
<span class="t" style="left:692.70px;top:494.25px;font-size:14px;line-height:17px;font-weight:400;color:#000;transform:scaleX(0.7952);">6</span>
<span class="t" style="left:735.00px;top:494.25px;font-size:14px;line-height:17px;font-weight:400;color:#000;transform:scaleX(0.8097);">D25</span>
<span class="t" style="left:782.50px;top:494.25px;font-size:14px;line-height:17px;font-weight:400;color:#000;transform:scaleX(0.8337);">-1147,3222</span>
<span class="t" style="left:864.40px;top:494.25px;font-size:14px;line-height:17px;font-weight:400;color:#000;transform:scaleX(0.7910);">637,8951</span>
<span class="t" style="left:642.60px;top:510.25px;font-size:14px;line-height:17px;font-weight:400;color:#000;transform:scaleX(0.7952);">7</span>
<span class="t" style="left:692.70px;top:510.25px;font-size:14px;line-height:17px;font-weight:400;color:#000;transform:scaleX(0.7952);">7</span>
<span class="t" style="left:735.00px;top:510.25px;font-size:14px;line-height:17px;font-weight:400;color:#000;transform:scaleX(0.8097);">D25</span>
<span class="t" style="left:782.50px;top:510.25px;font-size:14px;line-height:17px;font-weight:400;color:#000;transform:scaleX(0.8215);">-1043,0202</span>
<span class="t" style="left:864.40px;top:510.25px;font-size:14px;line-height:17px;font-weight:400;color:#000;transform:scaleX(0.7910);">670,6045</span>
<span class="t" style="left:642.60px;top:526.25px;font-size:14px;line-height:17px;font-weight:400;color:#000;transform:scaleX(0.7952);">8</span>
<span class="t" style="left:692.70px;top:526.25px;font-size:14px;line-height:17px;font-weight:400;color:#000;transform:scaleX(0.7952);">8</span>
<span class="t" style="left:735.00px;top:526.25px;font-size:14px;line-height:17px;font-weight:400;color:#000;transform:scaleX(0.8097);">D25</span>
<span class="t" style="left:788.50px;top:526.25px;font-size:14px;line-height:17px;font-weight:400;color:#000;transform:scaleX(0.8278);">-938,7182</span>
<span class="t" style="left:864.40px;top:526.25px;font-size:14px;line-height:17px;font-weight:400;color:#000;transform:scaleX(0.7910);">703,3139</span>
<span class="t" style="left:642.60px;top:542.25px;font-size:14px;line-height:17px;font-weight:400;color:#000;transform:scaleX(0.7952);">9</span>
<span class="t" style="left:692.70px;top:542.25px;font-size:14px;line-height:17px;font-weight:400;color:#000;transform:scaleX(0.7952);">9</span>
<span class="t" style="left:735.00px;top:542.25px;font-size:14px;line-height:17px;font-weight:400;color:#000;transform:scaleX(0.8097);">D25</span>
<span class="t" style="left:788.50px;top:542.25px;font-size:14px;line-height:17px;font-weight:400;color:#000;transform:scaleX(0.8278);">-834,4162</span>
<span class="t" style="left:864.40px;top:542.25px;font-size:14px;line-height:17px;font-weight:400;color:#000;transform:scaleX(0.7910);">736,0232</span>
<span class="t" style="left:636.10px;top:558.25px;font-size:14px;line-height:17px;font-weight:400;color:#000;transform:scaleX(0.8152);">10</span>
<span class="t" style="left:686.20px;top:558.25px;font-size:14px;line-height:17px;font-weight:400;color:#000;transform:scaleX(0.8152);">10</span>
<span class="t" style="left:735.00px;top:558.25px;font-size:14px;line-height:17px;font-weight:400;color:#000;transform:scaleX(0.8097);">D25</span>
<span class="t" style="left:788.50px;top:558.25px;font-size:14px;line-height:17px;font-weight:400;color:#000;transform:scaleX(0.8417);">-730,1141</span>
<span class="t" style="left:864.40px;top:558.25px;font-size:14px;line-height:17px;font-weight:400;color:#000;transform:scaleX(0.7910);">768,7325</span>
<div class="ab" style="left:914px;top:389px;width:19px;height:189px;background:linear-gradient(90deg,#f1f1f1,#fdfdfd 60%,#fff)"></div>
<div class="ab" style="left:915px;top:390px;width:15px;height:15px;border:1px solid #b4b4b4;border-radius:2.5px;background:linear-gradient(#fefefe,#f2f2f2 45%,#dadada);box-shadow:inset 0 0 0 1px #fff"></div>
<div class="ab" style="left:915px;top:408px;width:15px;height:16px;border:1px solid #b4b4b4;border-radius:2.5px;background:linear-gradient(#fefefe,#f2f2f2 45%,#dadada);box-shadow:inset 0 0 0 1px #fff"></div>
<div class="ab" style="left:915px;top:560px;width:15px;height:15px;border:1px solid #b4b4b4;border-radius:2.5px;background:linear-gradient(#fefefe,#f2f2f2 45%,#dadada);box-shadow:inset 0 0 0 1px #fff"></div>
<svg width="972" height="689"><g fill="none" stroke="#3c3c3c" stroke-width="2"><path d="M918.6 399.6 L922.6 395.6 L926.6 399.6"/><path d="M918.5 567.3 L922.5 571.4 L926.5 567.3"/></g><g stroke="#9a9a9a" stroke-width="1"><path d="M920 413.5 h6 M920 415.5 h6 M920 417.5 h6 M920 419.5 h6"/></g></svg>
<div class="ab" style="left:692px;top:662px;width:86px;height:19px;border:1px solid #6e6e6e;border-radius:4px;background:linear-gradient(#ffffff 0%,#f6f6f6 45%,#e4e4e4 55%,#dcdcdc 100%);box-shadow:inset 0 0 0 1px rgba(255,255,255,.7);"></div>
<span class="t" style="left:719.30px;top:665.88px;font-size:11.6px;line-height:14px;font-weight:700;color:#000;transform:scaleX(1.0087);">Apply</span>
<div class="ab" style="left:787px;top:662px;width:86px;height:19px;border:1px solid #6e6e6e;border-radius:4px;background:linear-gradient(#ffffff 0%,#f6f6f6 45%,#e4e4e4 55%,#dcdcdc 100%);box-shadow:inset 0 0 0 1px rgba(255,255,255,.7);"></div>
<span class="t" style="left:823.00px;top:665.81px;font-size:11.8px;line-height:14px;font-weight:400;color:#000;transform:scaleX(0.8741);">OK</span>
<div class="ab" style="left:880px;top:662px;width:86px;height:19px;border:1px solid #6e6e6e;border-radius:4px;background:linear-gradient(#ffffff 0%,#f6f6f6 45%,#e4e4e4 55%,#dcdcdc 100%);box-shadow:inset 0 0 0 1px rgba(255,255,255,.7);"></div>
<span class="t" style="left:907.10px;top:665.81px;font-size:11.8px;line-height:14px;font-weight:400;color:#000;transform:scaleX(0.8983);">Cancel</span>
</body></html>
